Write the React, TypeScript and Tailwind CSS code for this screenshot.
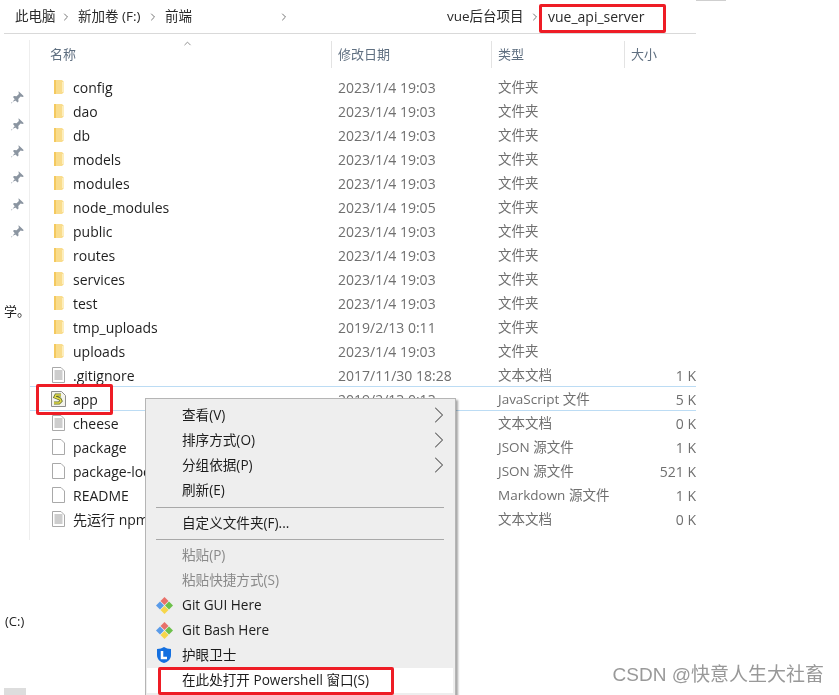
import React from "react";
import { ChevronRight, ChevronUp } from "lucide-react";

interface FileRow {
    name: string;
    date: string;
    type: string;
    size?: string;
    icon: "folder" | "text" | "blank" | "js";
}

const rows: FileRow[] = [
    { name: "config", date: "2023/1/4 19:03", type: "文件夹", icon: "folder" },
    { name: "dao", date: "2023/1/4 19:03", type: "文件夹", icon: "folder" },
    { name: "db", date: "2023/1/4 19:03", type: "文件夹", icon: "folder" },
    { name: "models", date: "2023/1/4 19:03", type: "文件夹", icon: "folder" },
    { name: "modules", date: "2023/1/4 19:03", type: "文件夹", icon: "folder" },
    { name: "node_modules", date: "2023/1/4 19:05", type: "文件夹", icon: "folder" },
    { name: "public", date: "2023/1/4 19:03", type: "文件夹", icon: "folder" },
    { name: "routes", date: "2023/1/4 19:03", type: "文件夹", icon: "folder" },
    { name: "services", date: "2023/1/4 19:03", type: "文件夹", icon: "folder" },
    { name: "test", date: "2023/1/4 19:03", type: "文件夹", icon: "folder" },
    { name: "tmp_uploads", date: "2019/2/13 0:11", type: "文件夹", icon: "folder" },
    { name: "uploads", date: "2023/1/4 19:03", type: "文件夹", icon: "folder" },
    { name: ".gitignore", date: "2017/11/30 18:28", type: "文本文档", size: "1 K", icon: "text" },
    { name: "app", date: "2019/2/13 0:13", type: "JavaScript 文件", size: "5 K", icon: "js" },
    { name: "cheese", date: "", type: "文本文档", size: "0 K", icon: "text" },
    { name: "package", date: "", type: "JSON 源文件", size: "1 K", icon: "blank" },
    { name: "package-lock", date: "", type: "JSON 源文件", size: "521 K", icon: "blank" },
    { name: "README", date: "", type: "Markdown 源文件", size: "1 K", icon: "blank" },
    { name: "先运行 npm", date: "", type: "文本文档", size: "0 K", icon: "text" },
];

const FolderIcon = () => (
    <svg width="12" height="16" viewBox="0 0 12 16">
        <path d="M1 1h8l2 2v10l-2 2H1z" fill="#f9dc8c" />
        <path d="M1 1h2v14H1z" fill="#f4c95f" />
        <path d="M9 3h2v10H9z" fill="#fdeebd" />
    </svg>
);

const DocIcon = ({ lines }: { lines: boolean }) => (
    <svg width="13" height="16" viewBox="0 0 13 16">
        <path d="M.5.5h8.500l3.500 3.500v11.500H.5z" fill="#fff" stroke="#a9a9a9" />
        {lines && <path d="M2.500 4h8M2.500 6h8M2.500 8h8M2.500 10h8M2.500 12h8" stroke="#9b9b9b" />}
    </svg>
);

const JsIcon = () => (
    <svg width="15" height="16" viewBox="0 0 15 16">
        <path d="M.5.5h10l4 4v11H.5z" fill="#f4f4ec" stroke="#8e8e8e" />
        <path d="M10 4H5L4 6l5 2 1 2-2 2H3" fill="none" stroke="#5f6a2a" strokeWidth="3" />
        <path d="M10 4H5L4 6l5 2 1 2-2 2H3" fill="none" stroke="#e4dc4a" strokeWidth="1.500" />
    </svg>
);

const PinIcon = () => (
    <svg width="15" height="15" viewBox="0 0 13 13">
        <path d="M7.500 1l4.500 4.500-1.200.6-1.600-.4-2 2 .2 2.300-1 .8L3.900 8 1.200 11.800 1 12l.3-1.300L5 9 2.600 6.100l.9-.9 2.200.2 2-2-.3-1.600z" fill="#8b95a1" />
    </svg>
);

const GitIcon = () => (
    <svg width="19" height="19" viewBox="0 0 19 19">
        <path d="M9.500 1l4 4-4 4-4-4z" fill="#e8716a" />
        <path d="M14 5.500l4 4-4 4-4-4z" fill="#6cc04a" />
        <path d="M9.500 10l4 4-4 4-4-4z" fill="#f6d64a" />
        <path d="M5 5.500l4 4-4 4-4-4z" fill="#5a9be8" />
    </svg>
);

const ShieldIcon = () => (
    <svg width="18" height="18" viewBox="0 0 18 18">
        <path d="M2 3c3 0 5-1 7-2 2 1 4 2 7 2v6c0 4-3 7-7 8-4-1-7-4-7-8z" fill="#1470e0" />
        <path d="M7 5v7h5" fill="none" stroke="#fff" strokeWidth="2.500" />
    </svg>
);

const Crumb = ({ label, width }: { label: string; width: string }) => (
    <span className={`${width} shrink-0 whitespace-nowrap`}>{label}</span>
);

const MenuItem = ({
    label,
    arrow,
    disabled,
    icon,
    active,
}: {
    label: string;
    arrow?: boolean;
    disabled?: boolean;
    icon?: React.ReactNode;
    active?: boolean;
}) => (
    <div
        className={`relative flex h-[25px] items-center pl-[35px] text-[13.6px] ${disabled ? "text-[#8a8a8a]" : "text-[#1c1c1c]"} ${active ? "bg-white" : ""}`}
    >
        {icon && <span className="absolute left-[8px] top-[3px]">{icon}</span>}
        {label}
        {arrow && <ChevronRight className="absolute right-0 top-[-2px] text-[#555]" size={28} strokeWidth={0.9} />}
    </div>
);

export default function App() {
    return (
        <div className="relative h-[695px] w-[839px] overflow-hidden bg-white font-['Open_Sans','Noto_Sans_CJK_SC',sans-serif] blur-[0.45px]">
            <div className="w-[696px] overflow-hidden">
                {/* address bar */}
                <div className="ml-[4px] flex h-[34px] items-center border-b border-[#d9d9d9] pl-[11px] text-[13.5px] text-[#2a2a2a]">
                    <Crumb label="此电脑" width="w-[45px]" />
                    <ChevronRight size={12} className="mr-[6px] text-[#777]" />
                    <Crumb label="新加卷 (F:)" width="w-[69px]" />
                    <ChevronRight size={12} className="mr-[6px] text-[#777]" />
                    <Crumb label="前端" width="w-[113px]" />
                    <ChevronRight size={12} className="mr-[157px] text-[#777]" />
                    <Crumb label="vue后台项目" width="w-[82px]" />
                    <ChevronRight size={12} className="mr-[7px] text-[#777]" />
                    <span className="shrink-0 whitespace-nowrap text-[14px]">vue_api_server</span>
                </div>

                <div className="flex">
                    {/* quick access strip */}
                    <div className="h-[661px] w-[29px] shrink-0 pt-[56px]">
                        <div className="flex flex-col gap-[11.800px] pl-[10px]">
                            <PinIcon />
                            <PinIcon />
                            <PinIcon />
                            <PinIcon />
                            <PinIcon />
                            <PinIcon />
                        </div>
                        <div className="mt-[63px] pl-[4px] text-[13px] text-[#222]">学。</div>
                        <div className="mt-[291px] pl-[5px] text-[13px] text-[#222]">(C:)</div>
                    </div>

                    <div className="mt-[6px] h-[500px] flex-1 border-l border-[#eeeeee]">
                        {/* column headers */}
                        <div className="relative flex h-[28px] items-center pt-[1px] text-[13px] text-[#5f6f80]">
                            <span className="w-[301px] pl-[20px]">名称</span>
                            <span className="w-[160px] border-l border-[#e3e3e3] pl-[6px] leading-[27px]">修改日期</span>
                            <span className="w-[133px] border-l border-[#e3e3e3] pl-[6px] leading-[27px]">类型</span>
                            <span className="flex-1 border-l border-[#e3e3e3] pl-[6px] leading-[27px]">大小</span>
                            <ChevronUp size={11} className="absolute left-[152px] top-[-2px] text-[#888]" />
                        </div>
                        {/* file rows */}
                        <div className="mt-[7px]">
                            {rows.map((row) => (
                                <div
                                    key={row.name}
                                    className={`flex items-center text-[14px] ${row.name === "app" ? "-mt-px h-[25px] border-y border-[#bcdcf4] pt-px" : "h-[24px]"}`}
                                >
                                    <div className="flex w-[301px] items-center">
                                        <span className="flex w-[43px] justify-center pl-[14px]">
                                            {row.icon === "folder" && <FolderIcon />}
                                            {row.icon === "text" && <DocIcon lines />}
                                            {row.icon === "blank" && <DocIcon lines={false} />}
                                            {row.icon === "js" && <JsIcon />}
                                        </span>
                                        <span className="text-[#1f1f1f]">{row.name}</span>
                                    </div>
                                    <span className="w-[160px] pl-[7px] text-[#6f6f6f]">{row.date}</span>
                                    <span className="w-[133px] pl-[7px] text-[13.500px] text-[#6f6f6f]">{row.type}</span>
                                    <span className="flex-1 whitespace-nowrap text-right text-[#6f6f6f]">{row.size}</span>
                                </div>
                            ))}
                        </div>
                    </div>
                </div>
            </div>

            {/* context menu */}
            <div className="absolute left-[145px] top-[398px] h-[300px] w-[311px] border border-[#b5b5b5] bg-[#eeeeee] pt-[4px] pl-[1px] pr-[2px] shadow-[2px_2px_2px_rgba(0,0,0,0.35)]">
                <MenuItem label="查看(V)" arrow />
                <MenuItem label="排序方式(O)" arrow />
                <MenuItem label="分组依据(P)" arrow />
                <MenuItem label="刷新(E)" />
                <div className="mx-[9px] mt-[4px] mb-[3px] h-px bg-[#a8a8a8]" />
                <MenuItem label="自定义文件夹(F)..." />
                <div className="mx-[9px] my-[3px] h-px bg-[#a8a8a8]" />
                <MenuItem label="粘贴(P)" disabled />
                <MenuItem label="粘贴快捷方式(S)" disabled />
                <MenuItem label="Git GUI Here" icon={<GitIcon />} />
                <MenuItem label="Git Bash Here" icon={<GitIcon />} />
                <MenuItem label="护眼卫士" icon={<ShieldIcon />} />
                <MenuItem label="在此处打开 Powershell 窗口(S)" active />
            </div>

            {/* red annotations */}
            <div className="absolute left-[539px] top-[4px] h-[29px] w-[127px] rounded-[2px] border-[3px] border-[#ee1c25]" />
            <div className="absolute left-[36px] top-[384px] h-[31px] w-[77px] rounded-[2px] border-[3px] border-[#ee1c25]" />
            <div className="absolute left-[158px] top-[667px] h-[28px] w-[236px] rounded-[2px] border-[3px] border-[#ee1c25]" />

            {/* cropped leftovers of the screenshot edges */}
            <div className="absolute left-[4px] top-[688px] h-[7px] w-[22px] bg-[#dddddd]" />
            <div className="absolute left-[696px] top-0 h-px w-[30px] bg-[#cfcfcf]" />

            {/* watermark */}
            <div className="absolute right-[15px] top-[661px] font-['Liberation_Sans','Noto_Sans_CJK_SC',sans-serif] text-[19px] text-[#999999]">CSDN @快意人生大社畜</div>
        </div>
    );
}
